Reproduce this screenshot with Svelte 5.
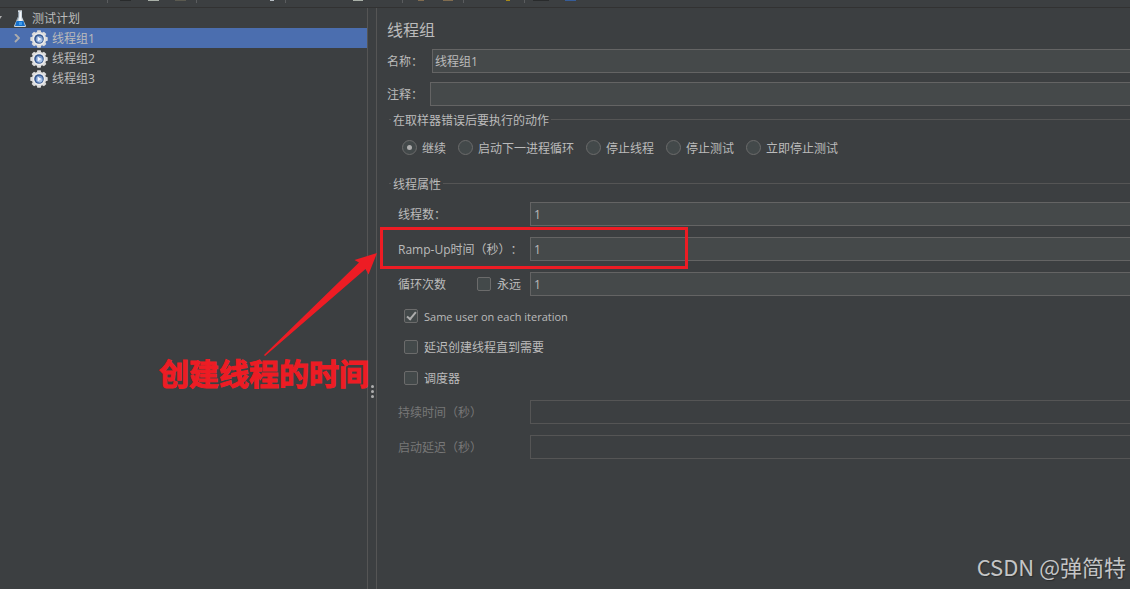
<script>
  let selected = $state(0);
  let onError = $state('continue');
  let name = $state('线程组1');
  let comment = $state('');
  let threads = $state('1');
  let rampUp = $state('1');
  let loops = $state('1');
  let forever = $state(false);
  let sameUser = $state(true);
  let delayedStart = $state(false);
  let scheduler = $state(false);

  const groups = ['线程组1', '线程组2', '线程组3'];

  const actions = [
    { value: 'continue', label: '继续' },
    { value: 'nextloop', label: '启动下一进程循环' },
    { value: 'stopthread', label: '停止线程' },
    { value: 'stoptest', label: '停止测试' },
    { value: 'stopnow', label: '立即停止测试' }
  ];
</script>

{#snippet gear()}
  <svg class="gear" viewBox="0 0 18 18" width="18" height="18" aria-hidden="true">
    <g fill="#dcdcdc">
      {#each [0, 45, 90, 135, 180, 225, 270, 315] as angle}
        <path d="M6.600 3.400 7.300 0.300h3.400L11.400 3.400z" transform="rotate({angle} 9 9)" />
      {/each}
      <circle cx="9" cy="9" r="7.200" />
    </g>
    <circle cx="9" cy="9" r="6" fill="#f0f0f0" />
    <circle cx="9" cy="9" r="4.800" fill="#35578f" />
    <circle cx="9.300" cy="9.300" r="3.500" fill="#7b9bcd" />
    <circle cx="10" cy="10.200" r="2.200" fill="#a9c2e6" />
    <path d="M7.600 6.600 11.200 9l-3.600 2.400z" fill="#f4f8ff" />
  </svg>
{/snippet}

<div class="app">
  <div class="toolbar">
    <svg width="580" height="7" viewBox="0 0 580 7" aria-hidden="true">
      <path d="M107.5 0v3M196.5 0v3M285.5 0v3M402.5 0v3M463.5 0v3M524.5 0v3" stroke="#5a5c5e" />
      <path d="M148 0h11v1h-11zM353 0h10v1h-10z" fill="#a9b0a8" />
      <path d="M120 0h11v1h-11zM533 0h16v1h-16z" fill="#292b2c" />
      <path d="M175 0h11v1h-11z" fill="#5b5a50" />
      <path d="M270 0h4v1h-4z" fill="#b5bcc2" />
      <path d="M418 0h6v1h-6zM443 0h10v1h-10z" fill="#806c50" />
      <path d="M506 0h4v1h-4z" fill="#a88b18" />
      <path d="M565 0h11v1h-11z" fill="#365c98" />
    </svg>
  </div>

  <div class="workspace">
    <nav class="tree">
      <button class="row root">
        <svg class="twist" width="6" height="6" viewBox="0 0 6 6" aria-hidden="true">
          <path d="M0 0h2L0 3z" fill="#adadad" />
        </svg>
        <svg class="flask" width="12" height="18" viewBox="0 0 12 18" aria-hidden="true">
          <path d="M4 1h4v6l4 9q0 1-1 1H1q-1 0-1-1l4-9z" fill="#cdd8e2" />
          <path d="M4 2h1v5L3 11H2l2-4z" fill="#8c9aa6" />
          <path d="M6 2h1v6l1 3H5z" fill="#f6f8fa" />
          <path d="M2.500 11h7l1.500 5H1z" fill="#1670cc" />
          <path d="M5 12h3v3H5z" fill="#3f9bea" />
          <path d="M4 0h4v1H4z" fill="#a9adb0" />
        </svg>
        测试计划
      </button>
      {#each groups as group, i}
        <button class="row" class:selected={selected === i} onclick={() => (selected = i)}>
          <span class="arrow">
            {#if i === 0}
              <svg width="6" height="10" viewBox="0 0 6 10" aria-hidden="true">
                <path d="M1 0l4 4-4 4" fill="none" stroke="#adadad" stroke-width="1.8" />
              </svg>
            {/if}
          </span>
          {@render gear()}
          {group}
        </button>
      {/each}
    </nav>

    <div class="splitter">
      <span></span><span></span><span></span>
    </div>

    <main>
      <h1>线程组</h1>
      <div class="line name">
        <label for="name">名称：</label>
        <input id="name" type="text" bind:value={name} />
      </div>
      <div class="line comment">
        <label for="comment">注释：</label>
        <input id="comment" type="text" bind:value={comment} />
      </div>

      <section class="group actions">
        <h2>在取样器错误后要执行的动作</h2>
        <div class="radios">
          {#each actions as action}
            <label>
              <input type="radio" name="onerror" value={action.value} bind:group={onError} />
              {action.label}
            </label>
          {/each}
        </div>
      </section>

      <section class="group">
        <h2>线程属性</h2>
        <div class="props">
          <div class="prop">
            <label class="caption" for="threads">线程数：</label>
            <input id="threads" type="text" bind:value={threads} />
          </div>
          <div class="prop">
            <label class="caption" for="rampup">Ramp-Up时间（秒）：</label>
            <input id="rampup" type="text" bind:value={rampUp} />
            <div class="highlight"></div>
          </div>
          <div class="prop">
            <div class="caption loops">
              <label for="loops">循环次数</label>
              <label class="check"><input type="checkbox" bind:checked={forever} />永远</label>
            </div>
            <input id="loops" type="text" bind:value={loops} />
          </div>
          <div class="checks">
            <label class="check latin"><input type="checkbox" bind:checked={sameUser} />Same user on each iteration</label>
            <label class="check"><input type="checkbox" bind:checked={delayedStart} />延迟创建线程直到需要</label>
            <label class="check"><input type="checkbox" bind:checked={scheduler} />调度器</label>
          </div>
          <div class="prop">
            <label class="caption" class:off={!scheduler} for="duration">持续时间（秒）</label>
            <input id="duration" type="text" disabled={!scheduler} />
          </div>
          <div class="prop">
            <label class="caption" class:off={!scheduler} for="delay">启动延迟（秒）</label>
            <input id="delay" type="text" disabled={!scheduler} />
          </div>
        </div>
      </section>
    </main>
  </div>

  <svg class="pointer" width="120" height="110" viewBox="0 0 120 110" aria-hidden="true">
    <path d="M4 105 99 12.500 94.500 10 117 3 108.500 24.500 105.500 19 5 106z" fill="#ed1c24" />
  </svg>
  <div class="note">创建线程的时间</div>
  <div class="watermark">CSDN @弹简特</div>
</div>

<style>
  :global(body) {
    background: #3c3f41;
  }

  .app {
    position: relative;
    display: flex;
    flex-direction: column;
    min-height: 100vh;
    overflow: hidden;
    color: #bbbbbb;
    font: 12px/20px "Open Sans", "Noto Sans CJK SC", sans-serif;
    text-spacing-trim: space-all;
  }

  .toolbar {
    height: 7px;
    border-bottom: 1px solid #323232;
  }

  .toolbar svg {
    display: block;
  }

  .workspace {
    flex: 1;
    display: flex;
  }

  .tree {
    width: 367px;
    border-right: 1px solid #555555;
  }

  .row {
    display: flex;
    align-items: center;
    box-sizing: border-box;
    width: 100%;
    height: 20px;
    padding: 2px 0 0;
    border: 0;
    background: none;
    color: inherit;
    font: inherit;
    text-align: left;
  }

  .row.selected {
    background: #4b6eaf;
  }

  .twist {
    margin-right: 8px;
  }

  .flask {
    margin-right: 6px;
  }

  .arrow {
    display: flex;
    width: 16px;
    padding-left: 14px;
  }

  .gear {
    margin-right: 4px;
  }

  .splitter {
    display: flex;
    flex-direction: column;
    align-items: center;
    gap: 2px;
    box-sizing: border-box;
    width: 9px;
    padding-top: 377px;
    border-right: 1px solid #555555;
  }

  .splitter span {
    width: 3px;
    height: 3px;
    border-radius: 50%;
    background: #adadad;
  }

  main {
    flex: 1;
    min-width: 0;
    padding: 10px 0 0 10px;
  }

  h1 {
    margin: 0 0 7px;
    font-size: 16px;
    line-height: 24px;
    font-weight: 400;
  }

  .line {
    display: flex;
    align-items: center;
    margin-bottom: 9px;
  }

  .line label {
    width: 43px;
    padding-top: 2px;
    line-height: 22px;
  }

  .name label {
    width: 45px;
  }

  input[type='text'] {
    flex: 1;
    min-width: 0;
    box-sizing: border-box;
    height: 24px;
    margin: 0 -1px 0 0;
    padding: 0 3px;
    border: 1px solid #646464;
    border-radius: 0;
    outline: 0;
    background: #45494a;
    color: inherit;
    font: inherit;
  }

  .name input[type='text'] {
    padding: 0 2px;
  }

  input[type='text']:disabled {
    border-color: #555555;
    background: #3c3f41;
  }

  .group {
    margin-left: 2px;
  }

  .actions {
    margin-bottom: 16px;
  }

  h2 {
    display: flex;
    align-items: center;
    gap: 2px;
    margin: 0;
    font-size: 12px;
    line-height: 20px;
    font-weight: 400;
  }

  .comment {
    margin-bottom: 5px;
  }

  h2::before,
  h2::after {
    content: '';
    width: 2px;
    height: 1px;
    margin-bottom: 4px;
    background: #555555;
  }

  h2::after {
    flex: 1;
  }

  .radios {
    display: flex;
    gap: 12px;
    padding: 8px 0 0 13px;
  }

  .radios label {
    display: flex;
    align-items: center;
    gap: 5px;
    white-space: nowrap;
  }

  input[type='radio'],
  input[type='checkbox'] {
    appearance: none;
    display: grid;
    place-items: center;
    box-sizing: border-box;
    flex: none;
    width: 15px;
    height: 15px;
    margin: 0 0 4px;
    border: 1px solid #6b6b6b;
    border-radius: 50%;
    background: #43494a;
  }

  input[type='radio']:checked::before {
    content: '';
    width: 5px;
    height: 5px;
    border-radius: 50%;
    background: #adadad;
  }

  input[type='checkbox'] {
    width: 14px;
    height: 14px;
    margin: 0 0 2px;
    border-radius: 2px;
  }

  input[type='checkbox']:checked::before {
    content: '';
    width: 3px;
    height: 8px;
    margin-bottom: 2px;
    border: solid #adadad;
    border-width: 0 2px 2px 0;
    transform: rotate(40deg);
  }

  .props {
    padding: 7px 0 0 9px;
  }

  .prop {
    position: relative;
    display: flex;
    align-items: center;
    margin-bottom: 11px;
  }

  .caption {
    flex: none;
    box-sizing: border-box;
    width: 132px;
    padding-top: 2px;
    line-height: 22px;
  }

  .off {
    color: #777777;
  }

  .loops {
    display: flex;
    justify-content: space-between;
    padding-right: 9px;
  }

  .check {
    display: flex;
    align-items: center;
    gap: 6px;
  }

  .latin {
    font-size: 11px;
  }

  .checks {
    display: flex;
    flex-direction: column;
    align-items: flex-start;
    gap: 11px;
    margin-bottom: 11px;
    padding: 0 0 0 6px;
  }

  .highlight {
    position: absolute;
    top: -10px;
    left: -18px;
    box-sizing: border-box;
    width: 308px;
    height: 42px;
    border: 3px solid #ed1c24;
    pointer-events: none;
  }

  .pointer {
    position: absolute;
    top: 250px;
    left: 260px;
    pointer-events: none;
  }

  .note {
    position: absolute;
    top: 354px;
    left: 159px;
    color: #ed1c24;
    font-size: 30px;
    line-height: 40px;
    font-weight: 700;
    white-space: nowrap;
    -webkit-text-stroke: 1px #ed1c24;
  }

  .watermark {
    position: absolute;
    right: 4px;
    bottom: 8px;
    color: #c4c5c6;
    font-family: "Noto Sans CJK SC", sans-serif;
    font-size: 22px;
    line-height: 30px;
    text-shadow: 1px 1px 1px #2b2d2e;
  }
</style>
